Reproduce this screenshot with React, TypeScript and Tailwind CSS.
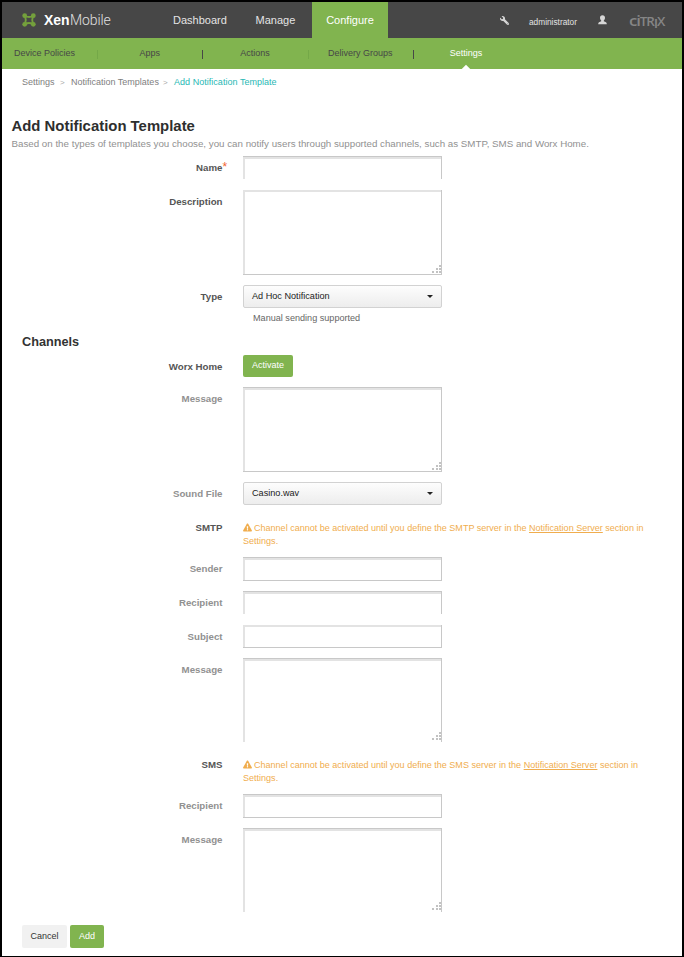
import React from 'react';
import { FaExclamationTriangle, FaWrench } from 'react-icons/fa';

const SUB_NAV = [
  { label: 'Device Policies', separator: 'bg-[#74a848]' },
  { label: 'Apps', separator: 'bg-[#474747]' },
  { label: 'Actions', separator: 'bg-[#74a848]' },
  { label: 'Delivery Groups', separator: 'bg-[#474747]' },
];

const XenLogo: React.FC = () => (
  <svg width="14" height="14" viewBox="0 0 14 14" className="shrink-0" fill="#74a03c">
    <path
      d="M3 3 Q7 5 11 3 Q9.4 7 11 11 Q7 9 3 11 Q4.6 7 3 3Z"
      fill="none"
      stroke="#74a03c"
      strokeWidth="1.9"
    />
    <circle cx="2.7" cy="2.7" r="2.4" />
    <circle cx="11.3" cy="2.7" r="2.4" />
    <circle cx="2.7" cy="11.3" r="2.4" />
    <circle cx="11.3" cy="11.3" r="2.4" />
  </svg>
);

const UserIcon: React.FC = () => (
  <svg width="9" height="10" viewBox="0 0 9 10" className="shrink-0" fill="#d6d6d6">
    <path d="M4.5 0.2C6.2 0.2 7 1.3 7 2.8C7 4.2 6.3 4.9 5.8 5.5V6.2L8 7.2Q8.8 7.7 8.8 9.3H0.2Q0.2 7.7 1 7.2L3.2 6.2V5.5C2.7 4.9 2 4.2 2 2.8C2 1.3 2.8 0.2 4.5 0.2Z" />
  </svg>
);

const Header: React.FC = () => (
  <header>
    <div className="flex h-9 items-center bg-[#474747] text-[11px] text-[#e4e4e4]">
      <div className="flex w-[171px] items-center pl-5">
        <XenLogo />
        <div className="ml-2 flex items-baseline text-[14px] leading-none text-white">
          <span className="w-[26px] font-bold">Xen</span>
          <span className="font-['Roboto',sans-serif] font-light tracking-[-0.1px] text-[#e0e0e0]">Mobile</span>
        </div>
      </div>
      <a className="w-[82.5px]">Dashboard</a>
      <a className="w-[56.5px]">Manage</a>
      <a className="flex h-9 w-[76px] items-center justify-center bg-[#81b44f] text-white">Configure</a>
      <FaWrench className="ml-[112px] h-[9px] w-[9px] -scale-x-100 text-[#d6d6d6]" />
      <span className="ml-5 mt-1 w-[48px] text-[8.3px]">administrator</span>
      <div className="ml-[21px]">
        <UserIcon />
      </div>
      <div className="ml-[22px] origin-left scale-x-[1.12] whitespace-nowrap font-['Open_Sans',sans-serif] text-[15px] font-semibold leading-none tracking-[-1px] text-[#858585]">
        ci<span className="text-[12px]">TR</span>
        <span className="relative top-[2px] text-[13px]">I</span>
        <span className="text-[12px]">X</span>
      </div>
    </div>

    <nav className="flex h-[31px] items-center overflow-hidden bg-[#81b44f] text-[9px] text-[#474747]">
      {SUB_NAV.map((item, index) => (
        <div
          key={item.label}
          className={`flex h-full items-center pt-px ${index === 0 ? 'w-[96px]' : 'w-[105.3px]'}`}
        >
          <span className={`flex-1 whitespace-nowrap ${index === 0 ? 'pl-3' : 'pr-px text-center'}`}>
            {item.label}
          </span>
          <span className={`h-[9px] w-px ${item.separator}`} />
        </div>
      ))}
      <div className="relative flex h-full w-[104px] items-center justify-center pt-px text-white">
        Settings
        <span className="absolute -bottom-[3px] left-[49px] h-[6px] w-[6px] rotate-45 bg-white" />
      </div>
    </nav>
  </header>
);

interface RowProps {
  label: string;
  muted?: boolean;
  required?: boolean;
  className: string;
  children: React.ReactNode;
}

const Row: React.FC<RowProps> = ({ label, muted, required, className, children }) => (
  <div className={`flex ${className}`}>
    <div
      className={`relative mr-[20.5px] w-[220.5px] shrink-0 pt-[4.5px] text-right text-[9.7px] font-bold leading-[13px] ${
        muted ? 'text-[#919191]' : 'text-[#555]'
      }`}
    >
      {label}
      {required && (
        <span className="absolute left-full top-[5px] text-[12px] font-normal text-[#f26430]">*</span>
      )}
    </div>
    {children}
  </div>
);

const Box: React.FC<{ className: string }> = ({ className }) => (
  <input
    type="text"
    className={`block w-[199px] border-r border-r-[#c8c8c8] bg-white shadow-[inset_2px_2px_0_#e3e3e3] outline-none ${className}`}
  />
);

const TextBox: React.FC<{ className: string }> = ({ className }) => (
  <div className="relative h-full w-[199px]">
    <textarea
      className={`block h-full w-full resize-none border-r border-r-[#c8c8c8] bg-white shadow-[inset_2px_2px_0_#e3e3e3] outline-none ${className}`}
    />
    <svg width="9" height="9" viewBox="0 0 9 9" className="absolute bottom-px right-px" fill="#c2c2c2">
      <path d="M7 0h2v2h-2zM4 3h2v2h-2zM7 3h2v2h-2zM0 6h2v2h-2zM4 6h2v2h-2zM7 6h2v2h-2z" />
    </svg>
  </div>
);

const SelectBox: React.FC<{ value: string }> = ({ value }) => (
  <button
    type="button"
    className="flex h-[23px] w-[199px] items-center justify-between rounded-[2px] border border-[#d2d2d2] bg-linear-to-b from-[#fdfdfd] to-[#ededed] pl-2 pr-2 text-[9.15px] text-[#222]"
  >
    {value}
    <span className="border-x-[3px] border-t-[3px] border-x-transparent border-t-[#222]" />
  </button>
);

const Warning: React.FC<{ server: string }> = ({ server }) => (
  <p className="w-[420px] pt-1.5 text-[9.04px] leading-[13px] text-[#f0ad4e]">
    <FaExclamationTriangle className="-mt-0.5 mr-[2px] inline h-[9px] w-[9px]" />
    Channel cannot be activated until you define the {server} server in the{' '}
    <a className="underline">Notification Server</a> section in
    <br />
    Settings.
  </p>
);

const App: React.FC = () => (
  <div className="h-[957px] w-[684px] overflow-hidden border-2 border-b border-black bg-white font-['Liberation_Sans',Arial,sans-serif]">
    <Header />

    <div className="flex h-[26px] items-center whitespace-nowrap pl-5 pt-px text-[9px] text-[#808080]">
      <a className="w-[38px]">Settings</a>
      <span className="w-[11px] text-[8px] text-[#aaa]">&gt;</span>
      <a className="w-[92px]">Notification Templates</a>
      <span className="w-[11px] text-[8px] text-[#aaa]">&gt;</span>
      <span className="tracking-[0.03px] text-[#29b8b5]">Add Notification Template</span>
    </div>

    <div className="mt-[22px] pl-[9.5px]">
      <h1 className="whitespace-nowrap text-[14.9px] font-bold leading-[18px] text-[#2e2e2e]">
        Add Notification Template
      </h1>
      <p className="mt-[2px] h-[19px] whitespace-nowrap text-[9.75px] leading-[14px] text-[#919191]">
        Based on the types of templates you choose, you can notify users through supported channels, such as SMTP, SMS and Worx Home.
      </p>
    </div>

    <Row label="Name" required className="h-[23px]">
      <Box className="h-[23px] border-t border-t-[#c8c8c8]" />
    </Row>
    <Row label="Description" className="mt-[11px] h-[85px]">
      <TextBox className="border-b border-b-[#c8c8c8]" />
    </Row>
    <Row label="Type" className="mt-[10px] h-[23px]">
      <SelectBox value="Ad Hoc Notification" />
    </Row>
    <p className="mt-1 pl-[251px] text-[9.1px] leading-[13px] text-[#666]">Manual sending supported</p>

    <h2 className="mt-[9px] h-[21px] pl-5 text-[12.7px] font-bold leading-[16px] text-[#333]">Channels</h2>

    <Row label="Worx Home" className="h-[22px]">
      <button type="button" className="h-[22px] w-[50px] rounded-[2px] bg-[#81b44f] text-[9px] text-white">
        Activate
      </button>
    </Row>
    <Row label="Message" muted className="mt-[10px] h-[85px]">
      <TextBox className="border-y border-y-[#c8c8c8]" />
    </Row>
    <Row label="Sound File" muted className="mt-[10px] h-[23px]">
      <SelectBox value="Casino.wav" />
    </Row>

    <Row label="SMTP" className="mt-[11px] h-[41px]">
      <Warning server="SMTP" />
    </Row>
    <Row label="Sender" muted className="h-6">
      <Box className="h-6 border-y border-y-[#c8c8c8]" />
    </Row>
    <Row label="Recipient" muted className="mt-[10px] h-[23px]">
      <Box className="h-[23px] border-t border-t-[#c8c8c8]" />
    </Row>
    <Row label="Subject" muted className="mt-[11px] h-[23px]">
      <Box className="h-[23px] border-b border-b-[#c8c8c8]" />
    </Row>
    <Row label="Message" muted className="mt-[10px] h-[84px]">
      <TextBox className="border-t border-t-[#c8c8c8]" />
    </Row>

    <Row label="SMS" className="mt-[11px] h-[41px]">
      <Warning server="SMS" />
    </Row>
    <Row label="Recipient" muted className="h-6">
      <Box className="h-6 border-y border-y-[#c8c8c8]" />
    </Row>
    <Row label="Message" muted className="mt-[10px] h-[84px]">
      <TextBox className="border-t border-t-[#c8c8c8]" />
    </Row>

    <div className="mt-[13px] flex gap-[3px] pl-5 text-[9px]">
      <button type="button" className="h-[23px] w-[45px] rounded-[2px] bg-[#f1f1f1] text-[#333]">
        Cancel
      </button>
      <button type="button" className="h-[23px] w-[34px] rounded-[2px] bg-[#81b44f] text-white">
        Add
      </button>
    </div>
  </div>
);

export default App;
